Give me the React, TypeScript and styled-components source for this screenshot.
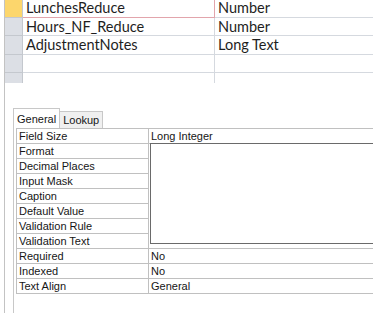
import React from "react";
import styled, { createGlobalStyle } from "styled-components";

const Global = createGlobalStyle`
  html, body { margin: 0; padding: 0; background: #fff; }
  body { width: 373px; height: 313px; overflow: hidden; }
  * { box-sizing: border-box; }
`;

const Page = styled.div`
  height: 313px;
  margin-left: 4px;
  border-left: 1px solid #c3c3c3;
  display: flex;
  flex-direction: column;
  overflow: hidden;
`;

const Grid = styled.div`
  margin-top: -1px;
  height: 84px;
  display: grid;
  grid-template-columns: 18px 192px 1fr;
  grid-auto-rows: 18.5px;
  overflow: hidden;
  font-family: "Lato", "Liberation Sans", sans-serif;
  font-size: 14.5px;
  color: #1e1e1e;
`;

const Selector = styled.div<{ $active?: boolean }>`
  background: ${(p) => (p.$active ? "#fcd66c" : "#dcdfe5")};
  border-bottom: 1px solid #c4c8ce;
  border-right: 1px solid #c4c8ce;
`;

const Cell = styled.div<{ $active?: boolean; $last?: boolean }>`
  padding-left: 3px;
  display: flex;
  align-items: center;
  white-space: nowrap;
  border-bottom: 1px solid ${(p) => (p.$active ? "#e2a5ac" : "#d5d9df")};
  border-right: ${(p) =>
    p.$last ? "none" : `1px solid ${p.$active ? "#e2a5ac" : "#d5d9df"}`};
`;

const Sheet = styled.div`
  margin-top: 25px;
  margin-left: 8px;
  flex: 1;
  display: flex;
  flex-direction: column;
  font-family: "Liberation Sans", Arial, sans-serif;
  font-size: 11px;
  color: #161616;
`;

const TabStrip = styled.div`
  display: flex;
  align-items: flex-end;
  height: 20px;
`;

const Tab = styled.div<{ $selected?: boolean }>`
  height: ${(p) => (p.$selected ? "20px" : "17px")};
  padding: 0 3px;
  display: flex;
  align-items: center;
  background: ${(p) => (p.$selected ? "#fff" : "#f0f0f0")};
  border: 1px solid #c8c8c8;
  border-bottom: none;
  border-left: ${(p) => (p.$selected ? "1px solid #c8c8c8" : "none")};
  font-size: 11px;
`;

const Panel = styled.div`
  flex: 1;
  border-left: 1px solid #c8c8c8;
  padding-left: 2px;
`;

const Props = styled.div`
  display: grid;
  grid-template-columns: 132px 1fr;
  grid-auto-rows: 15px;
  border-top: 1px solid #c0c0c0;
  border-left: 1px solid #c0c0c0;
  width: 400px;
`;

const Label = styled.div<{ $row: number }>`
  grid-column: 1;
  grid-row: ${(p) => p.$row};
  padding-left: 2px;
  line-height: 14px;
  border-right: 1px solid #c0c0c0;
  border-bottom: 1px solid #c0c0c0;
  white-space: nowrap;
`;

const Value = styled.div<{ $row: number }>`
  grid-column: 2;
  grid-row: ${(p) => p.$row};
  padding-left: 2px;
  line-height: 14px;
  border-bottom: 1px solid #c0c0c0;
  white-space: nowrap;
`;

const MemoSlot = styled.div`
  grid-column: 2;
  grid-row: 2 / span 7;
  margin-top: -1px;
  padding: 0 0 4px 1px;
  border-bottom: 1px solid #c0c0c0;
`;

const Memo = styled.div`
  height: 100%;
  border: 1px solid #6a6a6a;
  border-right: none;
  background: #fff;
`;

const fields = [
  { name: "LunchesReduce", type: "Number", active: true },
  { name: "Hours_NF_Reduce", type: "Number" },
  { name: "AdjustmentNotes", type: "Long Text" },
  { name: "", type: "" },
  { name: "", type: "" },
];

const props: [string, string | null][] = [
  ["Field Size", "Long Integer"],
  ["Format", null],
  ["Decimal Places", null],
  ["Input Mask", null],
  ["Caption", null],
  ["Default Value", null],
  ["Validation Rule", null],
  ["Validation Text", null],
  ["Required", "No"],
  ["Indexed", "No"],
  ["Text Align", "General"],
];

export default function App() {
  return (
    <>
      <Global />
      <Page>
        <Grid>
          {fields.map((f, i) => (
            <React.Fragment key={i}>
              <Selector $active={f.active} />
              <Cell $active={f.active}>{f.name}</Cell>
              <Cell $last>{f.type}</Cell>
            </React.Fragment>
          ))}
        </Grid>
        <Sheet>
          <TabStrip>
            <Tab $selected>General</Tab>
            <Tab>Lookup</Tab>
          </TabStrip>
          <Panel>
            <Props>
              {props.map(([label, value], i) => (
                <React.Fragment key={label}>
                  <Label $row={i + 1}>{label}</Label>
                  {value !== null && <Value $row={i + 1}>{value}</Value>}
                </React.Fragment>
              ))}
              <MemoSlot>
                <Memo />
              </MemoSlot>
            </Props>
          </Panel>
        </Sheet>
      </Page>
    </>
  );
}
